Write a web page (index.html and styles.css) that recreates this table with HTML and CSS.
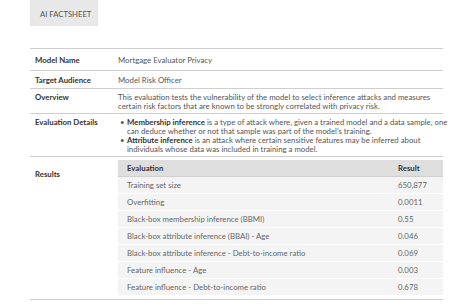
FILE: index.html
```html
<!DOCTYPE html>
<html lang="en">
<head>
  <meta charset="UTF-8">
  <meta name="viewport" content="width=device-width, initial-scale=1.0">
  <title>AI Factsheet</title>
  <link rel="stylesheet" href="styles.css">
</head>
<body>
  <div class="page">
    <div class="tab">AI FACTSHEET</div>

    <div class="sheet">
      <div class="row row-name">
        <div class="label">Model Name</div>
        <div class="value">Mortgage Evaluator Privacy</div>
      </div>
      <div class="row row-audience">
        <div class="label">Target Audience</div>
        <div class="value">Model Risk Officer</div>
      </div>
      <div class="row row-overview">
        <div class="label">Overview</div>
        <div class="value">This evaluation tests the vulnerability of the model to select inference attacks and measures certain risk factors that are known to be strongly correlated with privacy risk.</div>
      </div>
      <div class="row row-details">
        <div class="label">Evaluation Details</div>
        <ul class="value bullets">
          <li><b>Membership inference</b> is a type of attack where, given a trained model and a data sample, one can deduce whether or not that sample was part of the model’s training.</li>
          <li><b>Attribute inference</b> is an attack where certain sensitive features may be inferred about individuals whose data was included in training a model.</li>
        </ul>
      </div>
      <div class="row row-results">
        <div class="label results-label">Results</div>
        <table class="results">
          <thead>
            <tr><th>Evaluation</th><th>Result</th></tr>
          </thead>
          <tbody>
            <tr><td>Training set size</td><td>650,877</td></tr>
            <tr><td>Overfitting</td><td>0.0011</td></tr>
            <tr><td>Black-box membership inference (BBMI)</td><td>0.55</td></tr>
            <tr><td>Black-box attribute inference (BBAI) - Age</td><td>0.046</td></tr>
            <tr><td>Black-box attribute inference - Debt-to-income ratio</td><td>0.069</td></tr>
            <tr><td>Feature influence - Age</td><td>0.003</td></tr>
            <tr><td>Feature influence - Debt-to-income ratio</td><td>0.678</td></tr>
          </tbody>
        </table>
      </div>
    </div>
  </div>
</body>
</html>
```

FILE: styles.css
```css
/* General styles */
body {
  font-family: Lato, "Noto Sans", Arial, sans-serif;
  font-size: 7.8px;
  line-height: 9px;
  margin: 0;
  padding: 0;
  background-color: white;
  color: #555;
}
.page {
  padding: 0 31px 0 30px;
}

/* Top tab */
.tab {
  display: inline-block;
  width: 68px;
  height: 26px;
  line-height: 28px;
  box-sizing: border-box;
  padding-left: 10px;
  background-color: #e8e8e8;
  color: #555;
  font-size: 7.7px;
  vertical-align: top;
}

/* Factsheet rows */
.sheet {
  margin-top: 22px;
  border-top: 1px solid #cfcfcf;
  border-bottom: 1px solid #cfcfcf;
}
.row {
  display: flex;
  border-bottom: 1px solid #cfcfcf;
}
.row:last-child {
  border-bottom: none;
}
.label {
  width: 83px;
  flex-shrink: 0;
  padding-left: 5px;
  font-weight: bold;
  color: #333;
}
.value {
  flex: 1;
  margin: 0;
}
.row-name {
  padding: 7px 0 5px;
}
.row-audience {
  padding: 5px 0 3px;
}
.row-overview {
  padding: 4px 0 2px;
}
.row-details {
  padding: 4px 0 2px;
}
.bullets {
  list-style: none;
  padding: 0 0 0 2px;
  margin-right: -8px;
}
.bullets li {
  position: relative;
  padding-left: 7px;
}
.bullets li::before {
  content: "•";
  position: absolute;
  left: 0;
}
.bullets b {
  color: #333;
}

/* Results table */
.row-results {
  padding: 3px 0 3px;
}
.results-label {
  padding-top: 10px;
}
.results {
  flex: 1;
  border-collapse: collapse;
}
.results th, .results td {
  height: 16px;
  padding: 0 0 0 9px;
  text-align: left;
  border-bottom: 1px solid #fff;
}
.results th {
  background-color: #dedede;
  color: #333;
  font-weight: bold;
  border-bottom: 1px solid #d0d0d0;
}
.results td {
  background-color: #f4f4f4;
  color: #666;
}
.results th:last-child, .results td:last-child {
  width: 45px;
  padding-left: 0;
}
```
